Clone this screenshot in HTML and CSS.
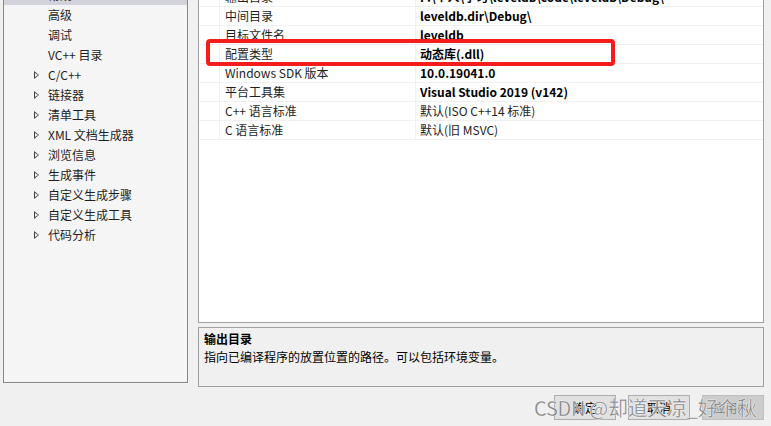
FILE: index.html
```html
<!DOCTYPE html>
<html lang="zh">
<head>
<meta charset="utf-8">
<link rel="stylesheet" href="styles.css">
</head>
<body>
<div class="main">
  <div class="tree">
    <div class="tree-inner">
      <div class="node sel"><span class="exp"></span>常规</div>
      <div class="node"><span class="exp"></span>高级</div>
      <div class="node"><span class="exp"></span>调试</div>
      <div class="node"><span class="exp"></span>VC++ 目录</div>
      <div class="node"><span class="exp tri"></span>C/C++</div>
      <div class="node"><span class="exp tri"></span>链接器</div>
      <div class="node"><span class="exp tri"></span>清单工具</div>
      <div class="node"><span class="exp tri"></span>XML 文档生成器</div>
      <div class="node"><span class="exp tri"></span>浏览信息</div>
      <div class="node"><span class="exp tri"></span>生成事件</div>
      <div class="node"><span class="exp tri"></span>自定义生成步骤</div>
      <div class="node"><span class="exp tri"></span>自定义生成工具</div>
      <div class="node"><span class="exp tri"></span>代码分析</div>
    </div>
  </div>
  <div class="right">
    <div class="grid">
      <div class="grid-inner">
        <div class="row"><div class="gut"></div><div class="lbl">输出目录</div><div class="val b">F:\个人\学习\leveldb\code\leveldb\Debug\</div></div>
        <div class="row"><div class="gut"></div><div class="lbl">中间目录</div><div class="val b">leveldb.dir\Debug\</div></div>
        <div class="row"><div class="gut"></div><div class="lbl">目标文件名</div><div class="val b">leveldb</div></div>
        <div class="row"><div class="gut"></div><div class="lbl">配置类型</div><div class="val b">动态库(.dll)</div></div>
        <div class="row"><div class="gut"></div><div class="lbl">Windows SDK 版本</div><div class="val b">10.0.19041.0</div></div>
        <div class="row"><div class="gut"></div><div class="lbl">平台工具集</div><div class="val b">Visual Studio 2019 (v142)</div></div>
        <div class="row"><div class="gut"></div><div class="lbl">C++ 语言标准</div><div class="val">默认(ISO C++14 标准)</div></div>
        <div class="row"><div class="gut"></div><div class="lbl">C 语言标准</div><div class="val">默认(旧 MSVC)</div></div>
      </div>
      <div class="highlight"></div>
    </div>
    <div class="desc">
      <div class="desc-title">输出目录</div>
      <div class="desc-text">指向已编译程序的放置位置的路径。可以包括环境变量。</div>
    </div>
  </div>
</div>
<div class="buttons">
  <div class="btn">确定</div>
  <div class="btn">取消</div>
  <div class="btn dis">应用(A)</div>
</div>
<div class="watermark">CSDN @却道天凉_好个秋</div>
</body>
</html>
```
FILE: styles.css
```css
html, body {
  margin: 0;
  padding: 0;
}
body {
  width: 771px;
  height: 426px;
  overflow: hidden;
  background: #f0f0f0;
  font-family: "Microsoft YaHei UI", "Noto Sans CJK SC", "Noto Sans", sans-serif;
  font-size: 12px;
  color: #1e1e1e;
  position: relative;
}
.main {
  display: flex;
  align-items: flex-start;
  height: 385px;
}
.tree {
  margin-left: 3px;
  width: 183px;
  height: 382px;
  background: #f5f5f5;
  border: 1px solid #878787;
  border-top: none;
  overflow: hidden;
}
.tree-inner {
  margin-top: -15px;
}
.node {
  height: 20px;
  line-height: 20px;
  display: flex;
  align-items: center;
  padding-left: 28px;
  white-space: nowrap;
}
.node.sel {
  background: #d2d2da;
}
.exp {
  width: 13px;
  height: 20px;
  margin-right: 3px;
  display: flex;
  align-items: center;
  justify-content: flex-start;
}
.exp.tri::before {
  content: "";
  display: block;
  width: 0;
  height: 0;
  border-top: 4px solid transparent;
  border-bottom: 4px solid transparent;
  border-left: 5px solid #444;
  margin-left: 2px;
}
.exp.tri::after {
  content: "";
  display: block;
  width: 0;
  height: 0;
  border-top: 2.5px solid transparent;
  border-bottom: 2.5px solid transparent;
  border-left: 3px solid #f5f5f5;
  margin-left: -4px;
}
.right {
  margin-left: 10px;
  width: 566px;
  display: flex;
  flex-direction: column;
}
.grid {
  height: 322px;
  background: #fff;
  border: 1px solid #a0a0a0;
  border-top: none;
  overflow: hidden;
  position: relative;
}
.grid-inner {
  margin-top: -12px;
}
.row {
  display: flex;
  height: 19px;
  box-sizing: border-box;
  border-bottom: 1px solid #f0f0f0;
  line-height: 18px;
  white-space: nowrap;
}
.gut {
  width: 20px;
  flex: none;
  background: #fff;
}
.lbl {
  width: 196px;
  flex: none;
  padding-left: 5px;
  box-sizing: border-box;
  border-left: 1px solid #f0f0f0;
}
.val {
  flex: 1;
  padding-left: 4px;
  border-left: 1px solid #f0f0f0;
  overflow: hidden;
}
.val.b {
  font-weight: bold;
  color: #000;
}
.highlight {
  position: absolute;
  left: 7px;
  top: 39px;
  width: 401px;
  height: 19px;
  border: 4px solid #f51c1c;
  border-radius: 4px;
}
.desc {
  margin-top: 4px;
  border: 1px solid #a0a0a0;
  background: #f0f0f0;
  padding: 2px 5px;
  height: 54px;
  line-height: 18px;
}
.desc-title {
  font-weight: bold;
  color: #000;
}
.desc-text {
  color: #000;
}
.buttons {
  display: flex;
  justify-content: flex-end;
  gap: 12px;
  margin-top: 10px;
  padding-right: 7px;
}
.btn {
  width: 60px;
  height: 23px;
  border: 1px solid #adadad;
  background: #e1e1e1;
  text-align: center;
  line-height: 23px;
  color: #000;
}
.btn.dis {
  background: #cccccc;
  border-color: #bfbfbf;
  color: #838383;
}
.watermark {
  position: absolute;
  left: 534px;
  top: 394px;
  font-family: "Noto Sans CJK SC", "Liberation Sans", sans-serif;
  font-size: 20px;
  line-height: 28px;
  letter-spacing: -0.3px;
  color: rgba(115, 115, 115, 0.85);
  -webkit-text-stroke: 0.3px rgba(255,255,255,0.6);
  text-shadow: 0 0 1px #fff, 0 0 1px #fff;
  white-space: nowrap;
}
```
